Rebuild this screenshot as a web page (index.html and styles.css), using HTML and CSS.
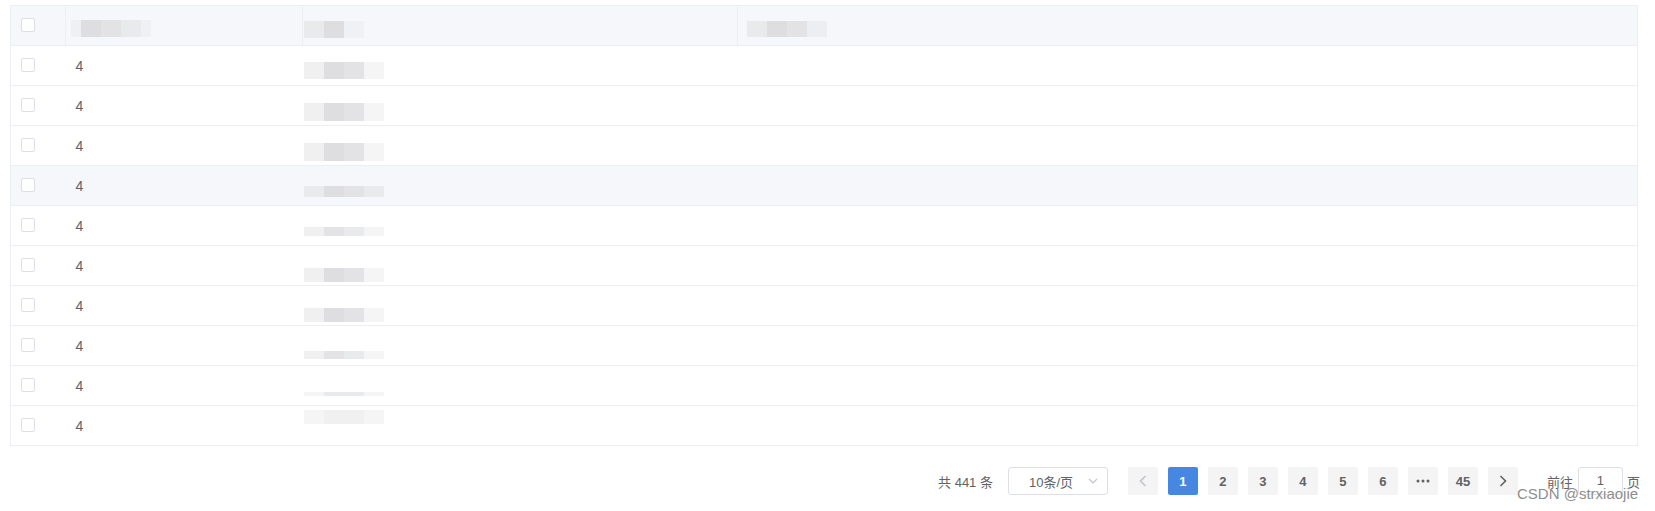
FILE: index.html
```html
<!DOCTYPE html>
<html lang="zh-CN">
<head>
  <meta charset="UTF-8" />
  <title>列表</title>
  <link rel="stylesheet" href="styles.css">
</head>
<body>
  <div class="page">
    <table class="grid">
      <colgroup>
        <col class="c-check" />
        <col class="c-num" />
        <col class="c-name" />
        <col />
      </colgroup>
      <thead>
        <tr>
          <th><span class="check"></span></th>
          <th><div class="blur head-a"><i class="l1"></i><i class="d1"></i><i class="d2"></i><i class="d3"></i><i class="l2"></i></div></th>
          <th><div class="blur head-b"><i class="d3"></i><i class="d1"></i><i class="l1"></i></div></th>
          <th><div class="blur head-c"><i class="d3"></i><i class="d1"></i><i class="d2"></i><i class="l1"></i></div></th>
        </tr>
      </thead>
      <tbody>
        <tr>
          <td><span class="check"></span></td>
          <td class="num">4</td>
          <td class="name"><div class="blur r1"><i class="l1"></i><i class="d1"></i><i class="d2"></i><i class="l2"></i></div></td>
          <td></td>
        </tr>
        <tr>
          <td><span class="check"></span></td>
          <td class="num">4</td>
          <td class="name"><div class="blur r2"><i class="l1"></i><i class="d1"></i><i class="d2"></i><i class="l2"></i></div></td>
          <td></td>
        </tr>
        <tr>
          <td><span class="check"></span></td>
          <td class="num">4</td>
          <td class="name"><div class="blur r2"><i class="l1"></i><i class="d1"></i><i class="d2"></i><i class="l2"></i></div></td>
          <td></td>
        </tr>
        <tr class="hover">
          <td><span class="check"></span></td>
          <td class="num">4</td>
          <td class="name"><div class="blur r4"><i class="d3"></i><i class="d1"></i><i class="d2"></i><i class="d3"></i></div></td>
          <td></td>
        </tr>
        <tr>
          <td><span class="check"></span></td>
          <td class="num">4</td>
          <td class="name"><div class="blur r5"><i class="l1"></i><i class="d2"></i><i class="d3"></i><i class="l2"></i></div></td>
          <td></td>
        </tr>
        <tr>
          <td><span class="check"></span></td>
          <td class="num">4</td>
          <td class="name"><div class="blur r6"><i class="l1"></i><i class="d1"></i><i class="d2"></i><i class="l2"></i></div></td>
          <td></td>
        </tr>
        <tr>
          <td><span class="check"></span></td>
          <td class="num">4</td>
          <td class="name"><div class="blur r6"><i class="l1"></i><i class="d1"></i><i class="d2"></i><i class="l2"></i></div></td>
          <td></td>
        </tr>
        <tr>
          <td><span class="check"></span></td>
          <td class="num">4</td>
          <td class="name"><div class="blur r8"><i class="l1"></i><i class="d2"></i><i class="d3"></i><i class="l2"></i></div></td>
          <td></td>
        </tr>
        <tr>
          <td><span class="check"></span></td>
          <td class="num">4</td>
          <td class="name"><div class="blur r9"><i class="l2"></i><i class="d3"></i><i class="d3"></i><i class="l2"></i></div></td>
          <td></td>
        </tr>
        <tr>
          <td><span class="check"></span></td>
          <td class="num">4</td>
          <td class="name"><div class="blur r10"><i class="l2"></i><i class="l1"></i><i class="l1"></i><i class="l2"></i></div></td>
          <td></td>
        </tr>
      </tbody>
    </table>

    <!-- Pagination -->
    <div class="pager">
      <span class="total">共 441 条</span>
      <div class="sizes">
        <span>10条/页</span>
        <svg class="caret" width="10" height="6" viewBox="0 0 10 6"><path d="M1 1l4 4 4-4" fill="none" stroke="#c0c4cc" stroke-width="1.2"/></svg>
      </div>
      <button class="btn disabled">
        <svg width="8" height="12" viewBox="0 0 8 12"><path d="M6.5 1L1.5 6l5 5" fill="none" stroke="#c0c4cc" stroke-width="1.6"/></svg>
      </button>
      <ul class="pages">
        <li class="btn active">1</li>
        <li class="btn">2</li>
        <li class="btn">3</li>
        <li class="btn">4</li>
        <li class="btn">5</li>
        <li class="btn">6</li>
        <li class="btn">
          <svg width="14" height="4" viewBox="0 0 14 4"><circle cx="2" cy="2" r="1.5" fill="#606266"/><circle cx="7" cy="2" r="1.5" fill="#606266"/><circle cx="12" cy="2" r="1.5" fill="#606266"/></svg>
        </li>
        <li class="btn">45</li>
      </ul>
      <button class="btn">
        <svg width="8" height="12" viewBox="0 0 8 12"><path d="M1.5 1l5 5-5 5" fill="none" stroke="#606266" stroke-width="1.6"/></svg>
      </button>
      <span class="jump">前往<span class="jump-box">1</span>页</span>
    </div>

    <div class="mark">CSDN @strxiaojie</div>
  </div>
</body>
</html>
```

FILE: styles.css
```css
/* Reset */
* {
  margin: 0;
  padding: 0;
  box-sizing: border-box;
}
body {
  font-family: "Liberation Sans", Arial, "Noto Sans CJK SC", sans-serif;
  font-size: 14px;
  color: #606266;
  background: #fff;
  width: 1655px;
  height: 511px;
  overflow: hidden;
}
.page {
  position: relative;
  height: 511px;
  padding: 5px 0 0 10px;
  width: 1638px;
}

/* Table */
.grid {
  width: 1628px;
  border-collapse: collapse;
  table-layout: fixed;
  border: 1px solid #ebeef5;
}
.c-check { width: 55px; }
.c-num { width: 237px; }
.c-name { width: 435px; }
.grid th {
  height: 40px;
  background: #f5f7fa;
  border-bottom: 1px solid #ebeef5;
  border-right: 1px solid #ebeef5;
  text-align: left;
  vertical-align: top;
  font-weight: normal;
}
.grid th:last-child {
  border-right: none;
}
.grid td {
  height: 40px;
  border-bottom: 1px solid #ebeef5;
  vertical-align: top;
}
.grid th:first-child,
.grid td:first-child {
  padding: 12px 0 0 10px;
}
.grid tr.hover td {
  background: #f5f7fa;
}
.check {
  display: block;
  width: 14px;
  height: 14px;
  border: 1px solid #dcdfe6;
  border-radius: 2px;
  background: #fff;
}
.num {
  padding: 12px 0 0 10px;
  line-height: 16px;
}

/* Mosaic blur placeholders */
.blur {
  display: flex;
  width: max-content;
}
.blur i {
  display: block;
  width: 20px;
  height: 100%;
}
.blur .d1 { background: #dedee0; }
.blur .d2 { background: #e3e3e5; }
.blur .d3 { background: #e9eaec; }
.blur .l1 { background: #f0f0f1; }
.blur .l2 { background: #f5f5f5; }
.head-a { margin: 14px 0 0 5px; height: 17px; }
.head-a .l1, .head-a .l2 { width: 10px; background: #eef0f3; }
.head-b { margin: 15px 0 0 1px; height: 17px; }
.head-b .l1 { background: #f0f1f4; }
.head-c { margin: 15px 0 0 9px; height: 16px; }
.head-c .l1 { background: #eceef1; }
.name .blur { margin-left: 1px; }
.r1 { margin-top: 16px; height: 17px; }
.r2 { margin-top: 17px; height: 18px; }
.r4 { margin-top: 20px; height: 11px; }
.r5 { margin-top: 21px; height: 9px; }
.r6 { margin-top: 22px; height: 14px; }
.r8 { margin-top: 25px; height: 8px; }
.r9 { margin-top: 26px; height: 4px; }
.r10 { margin-top: 4px; height: 14px; }

/* Pagination */
.pager {
  display: flex;
  align-items: center;
  justify-content: flex-end;
  width: 1630px;
  margin-top: 21px;
  height: 28px;
  font-size: 13px;
}
.total {
  margin-right: 15px;
}
.sizes {
  display: flex;
  align-items: center;
  width: 100px;
  height: 28px;
  border: 1px solid #dcdfe6;
  border-radius: 3px;
  padding: 0 9px 0 20px;
  margin-right: 20px;
}
.sizes span {
  flex: 1;
}
.pages {
  display: flex;
  list-style: none;
}
.btn {
  display: flex;
  align-items: center;
  justify-content: center;
  min-width: 30px;
  height: 28px;
  margin-right: 10px;
  border: none;
  border-radius: 2px;
  background: #f4f4f5;
  color: #606266;
  font-family: inherit;
  font-size: 13px;
  font-weight: bold;
}
.btn.active {
  background: #4688e1;
  color: #fff;
}
.jump {
  display: flex;
  align-items: center;
  margin-left: 19px;
}
.jump-box {
  display: block;
  width: 45px;
  height: 28px;
  line-height: 26px;
  margin: 0 4px 0 5px;
  border: 1px solid #dcdfe6;
  border-radius: 3px;
  text-align: center;
}

/* Watermark */
.mark {
  position: absolute;
  left: 1517px;
  top: 485px;
  font-size: 15px;
  color: #8e8e8e;
  text-shadow: 0 0 1px #fff;
  white-space: nowrap;
}
```
